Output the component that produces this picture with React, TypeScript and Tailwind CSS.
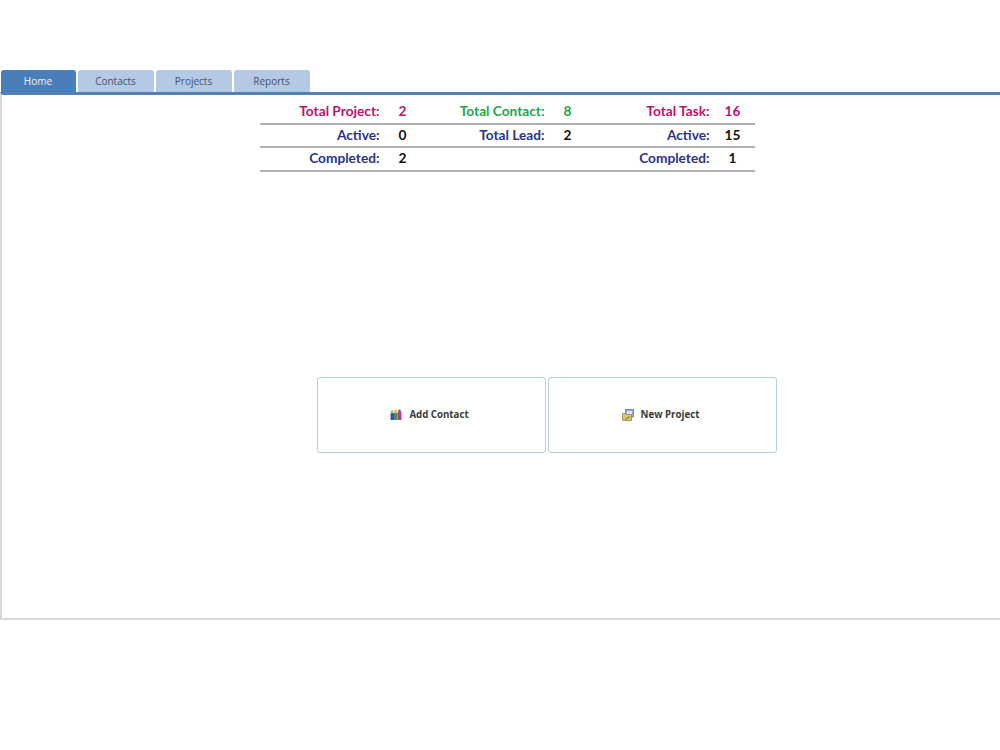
const tabs = ["Contacts", "Projects", "Reports"];

const rows = [
  [
    { label: "Total Project:", value: "2", tone: "pink" },
    { label: "Total Contact:", value: "8", tone: "green" },
    { label: "Total Task:", value: "16", tone: "pink" },
  ],
  [
    { label: "Active:", value: "0", tone: "navy" },
    { label: "Total Lead:", value: "2", tone: "navy" },
    { label: "Active:", value: "15", tone: "navy" },
  ],
  [
    { label: "Completed:", value: "2", tone: "navy" },
    { label: "", value: "", tone: "navy" },
    { label: "Completed:", value: "1", tone: "navy" },
  ],
];

const labelTones: Record<string, string> = {
  pink: "text-[#c4106a]",
  green: "text-[#1fa64a]",
  navy: "text-[#2b3390]",
};

const valueTones: Record<string, string> = {
  pink: "text-[#c4106a]",
  green: "text-[#1fa64a]",
  navy: "text-[#111111]",
};

function ContactIcon() {
  return (
    <svg width="12" height="12" viewBox="0 0 12 12" className="shrink-0">
      <rect x="0.5" y="4" width="3.5" height="7" rx="0.8" fill="#2f55c4" />
      <circle cx="2.2" cy="2.8" r="1.5" fill="#d9a23a" />
      <rect x="4" y="3.5" width="3.5" height="7.5" rx="0.8" fill="#2f9e48" />
      <circle cx="5.8" cy="2" r="1.5" fill="#e0c040" />
      <rect x="7.5" y="3" width="4" height="8" rx="0.8" fill="#c63a8e" />
      <circle cx="9.5" cy="2" r="1.5" fill="#7a4bb0" />
      <rect x="4.5" y="6" width="2" height="2" fill="#d8404a" />
      <rect x="8.5" y="7" width="2" height="3" fill="#7a4bb0" />
    </svg>
  );
}

function ProjectIcon() {
  return (
    <svg width="12" height="12" viewBox="0 0 12 12" className="shrink-0">
      <rect x="3.5" y="0.5" width="8" height="7.5" fill="#8fa8d8" stroke="#5a6f9e" strokeWidth="0.7" />
      <rect x="5" y="2" width="5" height="3.5" fill="#dbe6f6" />
      <path d="M0.5 4.5h3l1 1h5v6h-9z" fill="#e3c667" stroke="#8f7a3a" strokeWidth="0.7" />
      <path d="M3 10l4-3 1 1-4 3z" fill="#6f9a5a" />
    </svg>
  );
}

function ActionCard({ label, icon }: { label: string; icon: React.ReactNode }) {
  return (
    <button
      type="button"
      className="flex h-[76px] w-[228.5px] items-center justify-center gap-[7px] rounded-[3px] border-[1.5px] border-[#bccce5] bg-white pr-[3.5px] font-['Open_Sans',sans-serif] text-[9.7px] font-bold text-[#3a3a3a]"
    >
      {icon}
      {label}
    </button>
  );
}

export default function App() {
  return (
    <div className="h-[750px] w-[1000px] overflow-hidden bg-white pt-[70px]">
      <div className="flex h-[22px] items-stretch gap-[2px] pl-px font-['Open_Sans',sans-serif] text-[10px]">
        <div className="flex w-[75px] items-center justify-center rounded-t-[3px] bg-[#4a7ebb] pt-px pr-px text-[#eef3fa]">
          Home
        </div>
        {tabs.map((tab) => (
          <div
            key={tab}
            className="flex w-[76px] items-center justify-center rounded-t-[3px] bg-[#b5c9e4] pt-px pr-px text-[#44546a]"
          >
            {tab}
          </div>
        ))}
      </div>
      <div className="h-[527.5px] border-t-[3px] border-b-2 border-l-2 border-t-[#5480b8] border-b-[#d6d8db] border-l-[#d6d8db]">
        <div className="ml-[258px] w-[495px] pt-[6px] font-['Lato',sans-serif] text-[13.7px] font-bold">
          {rows.map((row, index) => (
            <div
              key={index}
              className="grid h-[23.5px] grid-cols-[120px_45px_120px_45px_120px_45px] items-center border-b-2 border-[#b0b1b3] pb-[4px]"
            >
              {row.map((cell, cellIndex) => (
                <div key={cellIndex} className="contents">
                  <span className={`pr-[0.5px] text-right ${labelTones[cell.tone]}`}>{cell.label}</span>
                  <span className={`text-center ${valueTones[cell.tone]}`}>{cell.value}</span>
                </div>
              ))}
            </div>
          ))}
        </div>
        <div className="ml-[315px] mt-[205.5px] flex gap-[2.5px]">
          <ActionCard label="Add Contact" icon={<ContactIcon />} />
          <ActionCard label="New Project" icon={<ProjectIcon />} />
        </div>
      </div>
    </div>
  );
}
